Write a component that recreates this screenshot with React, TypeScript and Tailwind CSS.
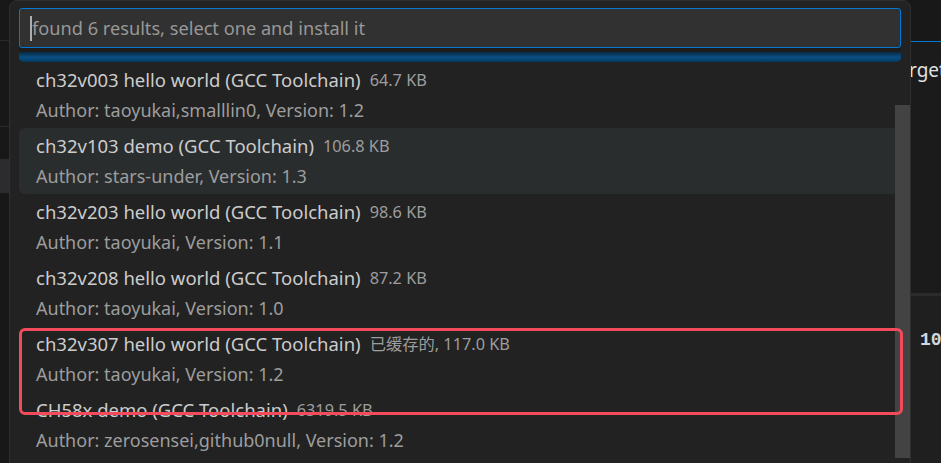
import React from "react";

const items = [
  { label: "ch32v003 hello world (GCC Toolchain)", desc: "64.7 KB", detail: "Author: taoyukai,smalllin0, Version: 1.2" },
  { label: "ch32v103 demo (GCC Toolchain)", desc: "106.8 KB", detail: "Author: stars-under, Version: 1.3", hover: true },
  { label: "ch32v203 hello world (GCC Toolchain)", desc: "98.6 KB", detail: "Author: taoyukai, Version: 1.1" },
  { label: "ch32v208 hello world (GCC Toolchain)", desc: "87.2 KB", detail: "Author: taoyukai, Version: 1.0" },
  { label: "ch32v307 hello world (GCC Toolchain)", desc: "已缓存的, 117.0 KB", detail: "Author: taoyukai, Version: 1.2" },
  { label: "CH58x demo (GCC Toolchain)", desc: "6319.5 KB", detail: "Author: zerosensei,github0null, Version: 1.2" },
];

const font = { fontFamily: '"Noto Sans", "Noto Sans CJK SC", sans-serif' };

export default function App() {
  return (
    <div className="w-[941px] h-[463px] overflow-hidden bg-[#181818] flex relative" style={font}>
      {/* left strip */}
      <div className="w-[9px] shrink-0 flex flex-col">
        <div className="h-[41px] bg-[#181818] border-b border-[#2b2b2b]" />
        <div className="h-[86px] bg-[#181818] border-b border-[#2b2b2b]" />
        <div className="h-[32px] bg-[#181818]" />
        <div className="h-[34px] bg-[#2c2c2f]" />
        <div className="flex-1 bg-[#181818]" />
      </div>

      {/* quick pick panel */}
      <div className="w-[902px] shrink-0 h-[480px] bg-[#222222] border border-[#2f2f2f] rounded-t-[8px] px-[9px] pt-[7px] flex flex-col relative">
        <div className="h-[40px] shrink-0 bg-[#313131] border border-[#0078d4] rounded-[3px] flex items-center pl-[10px]">
          <div className="w-[2px] h-[25px] bg-[#aeafad]" />
          <span className="text-[18.2px] text-[#989898] leading-none">found 6 results, select one and install it</span>
        </div>
        <div className="h-[4px] shrink-0 bg-[#1c1c1c]" />
        <div className="h-[10px] shrink-0 rounded-b-[5px] bg-[linear-gradient(to_bottom,#072a42,#0a4f84_55%,#04395e)]" />
        <div className="flex">
          <div className="flex-1 flex flex-col">
            {items.map((it, i) => (
              <div
                key={i}
                className={`h-[66px] shrink-0 flex flex-col pt-[4px] pl-[17px] rounded-[6px] ${it.hover ? "bg-[#2a2d2e]" : ""}`}
              >
                <div className="h-[28px] flex items-center whitespace-nowrap">
                  <span className="text-[18.5px] text-[#cccccc]">{it.label}</span>
                  <span className="text-[16.3px] text-[#9d9d9d] ml-[9px]">{it.desc}</span>
                </div>
                <div className="h-[32px] flex items-center whitespace-nowrap">
                  <span className="text-[18px] text-[#9d9d9d]">{it.detail}</span>
                </div>
              </div>
            ))}
          </div>
        </div>
        {/* scrollbar */}
        <div className="absolute right-0 top-[104px] w-[15px] h-[353px] bg-[#434343]" />
        {/* annotation */}
        <div className="absolute left-[9px] top-[327px] w-[884px] h-[87px] border-[3px] border-[#f24b5b] rounded-[6px]" />
      </div>

      {/* right strip */}
      <div className="flex-1 flex flex-col overflow-hidden">
        <div className="h-[42px] bg-[#181818] border-b border-[#0078d4] shrink-0" />
        <div className="h-[254px] bg-[#1b1b1b] border-b-[3px] border-[#2b2b2b] shrink-0 pt-[19px]">
          <span className="block -ml-[2px] text-[19px] text-[#e0e0e0] leading-none whitespace-nowrap">rget</span>
        </div>
        <div className="flex-1 bg-[#1f1f1f] pt-[31px] pl-[9px]">
          <span className="text-[18px] font-bold text-[#cfd8e0] leading-none whitespace-nowrap" style={{ fontFamily: '"Liberation Mono", monospace' }}>10</span>
        </div>
      </div>
    </div>
  );
}
